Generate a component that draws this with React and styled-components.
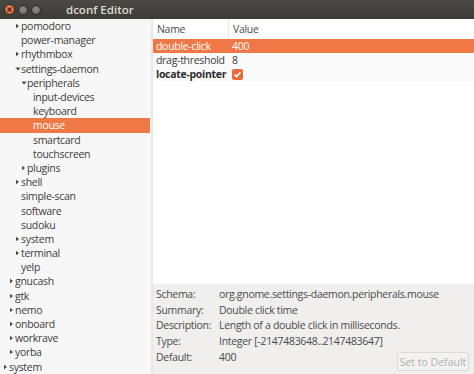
import React from "react";
import styled, { createGlobalStyle } from "styled-components";

const Global = createGlobalStyle`
  html, body { margin: 0; padding: 0; background: #f2f1f0; }
  body { font-family: "Open Sans", "Noto Sans", sans-serif; }
  * { box-sizing: border-box; }
`;

const Window = styled.div`
  width: 474px;
  height: 374px;
  display: flex;
  flex-direction: column;
  overflow: hidden;
  background: #f2f1f0;
  font-size: 10.5px;
  letter-spacing: -0.3px;
  color: #3c3c3c;
`;

const TitleBar = styled.div`
  height: 19px;
  flex: none;
  display: flex;
  align-items: center;
  padding-left: 4px;
  gap: 3px;
  background: linear-gradient(#4a4944, #3c3b37);
`;

const WinButton = styled.div`
  width: ${(p) => (p.$close ? 11 : 10)}px;
  height: ${(p) => (p.$close ? 11 : 10)}px;
  border-radius: 50%;
  display: flex;
  align-items: center;
  justify-content: center;
  background: ${(p) =>
    p.$close
      ? "radial-gradient(circle at 50% 40%, #f28a5c, #e0592a)"
      : "radial-gradient(circle at 50% 40%, #8d8b84, #64635d)"};
  border: 1px solid #2a2925;
`;

const Title = styled.div`
  margin-left: 22px;
  color: #dfdbd2;
  font-weight: 600;
  font-size: 11.5px;
  letter-spacing: 0;
`;

const Body = styled.div`
  flex: 1;
  display: flex;
  min-height: 0;
`;

const Sidebar = styled.div`
  width: 153px;
  flex: none;
  background: #f7f7f7;
  border-right: 2px solid #e8e7e6;
  overflow: hidden;
`;

const TreeRow = styled.div`
  height: 14.2px;
  display: flex;
  align-items: center;
  padding-left: ${(p) => 3 + p.$depth * 6}px;
  background: ${(p) => (p.$selected ? "#f07746" : "transparent")};
  color: ${(p) => (p.$selected ? "#ffffff" : "#3c3c3c")};
  white-space: nowrap;
  width: 150px;
`;

const Arrow = styled.span`
  width: 6px;
  flex: none;
  display: flex;
  align-items: center;
`;

const Main = styled.div`
  flex: 1;
  display: flex;
  flex-direction: column;
  min-width: 0;
`;

const ListHeader = styled.div`
  height: 19px;
  flex: none;
  display: flex;
  background: #ffffff;
  color: #4c4c4c;
`;

const HeaderCell = styled.div`
  width: ${(p) => p.$w || "auto"};
  flex: ${(p) => (p.$w ? "none" : 1)};
  display: flex;
  align-items: center;
  padding-left: 4px;
  border-right: ${(p) => (p.$w ? "1px solid #e4e4e4" : "none")};
`;

const List = styled.div`
  flex: 1;
  background: #ffffff;
  padding-top: 1px;
`;

const KeyRow = styled.div`
  height: 14px;
  display: flex;
  align-items: center;
  background: ${(p) => (p.$selected ? "#f07746" : "#fafafa")};
  color: ${(p) => (p.$selected ? "#ffffff" : "#3c3c3c")};
`;

const KeyName = styled.div`
  width: 78px;
  padding-left: 3px;
  white-space: nowrap;
  font-weight: ${(p) => (p.$bold ? 700 : 400)};
  color: ${(p) => (p.$bold ? "#2e2e2e" : "inherit")};
`;

const KeyValue = styled.div`
  padding-left: 1px;
  display: flex;
  align-items: center;
`;

const Check = styled.div`
  width: 11px;
  height: 11px;
  border-radius: 2px;
  background: #e96b3b;
  display: flex;
  align-items: center;
  justify-content: center;
`;

const Info = styled.div`
  height: 90px;
  flex: none;
  background: #f0efee;
  padding: 2px 3px 0 3px;
  display: grid;
  grid-template-columns: 63px 1fr;
  grid-auto-rows: 15.7px;
  align-items: center;
  color: #4a4a4a;
  position: relative;
`;

const Label = styled.div``;
const Val = styled.div`
  white-space: nowrap;
`;

const DefaultButton = styled.button`
  position: absolute;
  right: 5px;
  bottom: 3px;
  height: 19px;
  width: 72px;
  padding: 0;
  font: inherit;
  color: #b0afac;
  background: #f4f3f2;
  border: 1px solid #dcdad7;
  border-radius: 3px;
`;

const tree = [
  ["pomodoro", 2, true],
  ["power-manager", 2, false],
  ["rhythmbox", 2, true],
  ["settings-daemon", 2, "open"],
  ["peripherals", 3, "open"],
  ["input-devices", 4, false],
  ["keyboard", 4, false],
  ["mouse", 4, false, true],
  ["smartcard", 4, false],
  ["touchscreen", 4, false],
  ["plugins", 3, true],
  ["shell", 2, true],
  ["simple-scan", 2, false],
  ["software", 2, false],
  ["sudoku", 2, false],
  ["system", 2, true],
  ["terminal", 2, true],
  ["yelp", 2, false],
  ["gnucash", 1, true],
  ["gtk", 1, true],
  ["nemo", 1, true],
  ["onboard", 1, true],
  ["workrave", 1, true],
  ["yorba", 1, true],
  ["system", 0, true],
];

function ArrowIcon({ kind, color }) {
  if (kind === "open")
    return (
      <svg width="6" height="6" viewBox="0 0 6 6">
        <path d="M0.5 1.5 L5.5 1.5 L3 4.5 Z" fill={color} />
      </svg>
    );
  if (kind)
    return (
      <svg width="6" height="6" viewBox="0 0 6 6">
        <path d="M1 0.8 L4 3 L1 5.2 Z" fill={color} />
      </svg>
    );
  return null;
}

export default function App() {
  return (
    <Window>
      <Global />
      <TitleBar>
        <WinButton $close>
          <svg width="5" height="5" viewBox="0 0 5 5">
            <path d="M0.5 0.5 L4.5 4.5 M4.5 0.5 L0.5 4.5" stroke="#3a2a22" strokeWidth="1.2" />
          </svg>
        </WinButton>
        <WinButton />
        <WinButton />
        <Title>dconf Editor</Title>
      </TitleBar>
      <Body>
        <Sidebar>
          {tree.map(([name, depth, kind, sel], i) => (
            <TreeRow key={i} $depth={depth} $selected={sel}>
              <Arrow>
                <ArrowIcon kind={kind} color={sel ? "#fff" : "#4a4a4a"} />
              </Arrow>
              {name}
            </TreeRow>
          ))}
        </Sidebar>
        <Main>
          <ListHeader>
            <HeaderCell $w="76px">Name</HeaderCell>
            <HeaderCell>Value</HeaderCell>
          </ListHeader>
          <List>
            <KeyRow $selected>
              <KeyName>double-click</KeyName>
              <KeyValue>400</KeyValue>
            </KeyRow>
            <KeyRow>
              <KeyName>drag-threshold</KeyName>
              <KeyValue>8</KeyValue>
            </KeyRow>
            <KeyRow>
              <KeyName $bold>locate-pointer</KeyName>
              <KeyValue>
                <Check>
                  <svg width="9" height="9" viewBox="0 0 9 9">
                    <path d="M1.5 4.5 L3.6 6.6 L7.5 2.2" stroke="#fff" strokeWidth="1.6" fill="none" />
                  </svg>
                </Check>
              </KeyValue>
            </KeyRow>
          </List>
          <Info>
            <Label>Schema:</Label>
            <Val>org.gnome.settings-daemon.peripherals.mouse</Val>
            <Label>Summary:</Label>
            <Val>Double click time</Val>
            <Label>Description:</Label>
            <Val>Length of a double click in milliseconds.</Val>
            <Label>Type:</Label>
            <Val>Integer [-2147483648..2147483647]</Val>
            <Label>Default:</Label>
            <Val>400</Val>
            <DefaultButton disabled>Set to Default</DefaultButton>
          </Info>
        </Main>
      </Body>
    </Window>
  );
}
